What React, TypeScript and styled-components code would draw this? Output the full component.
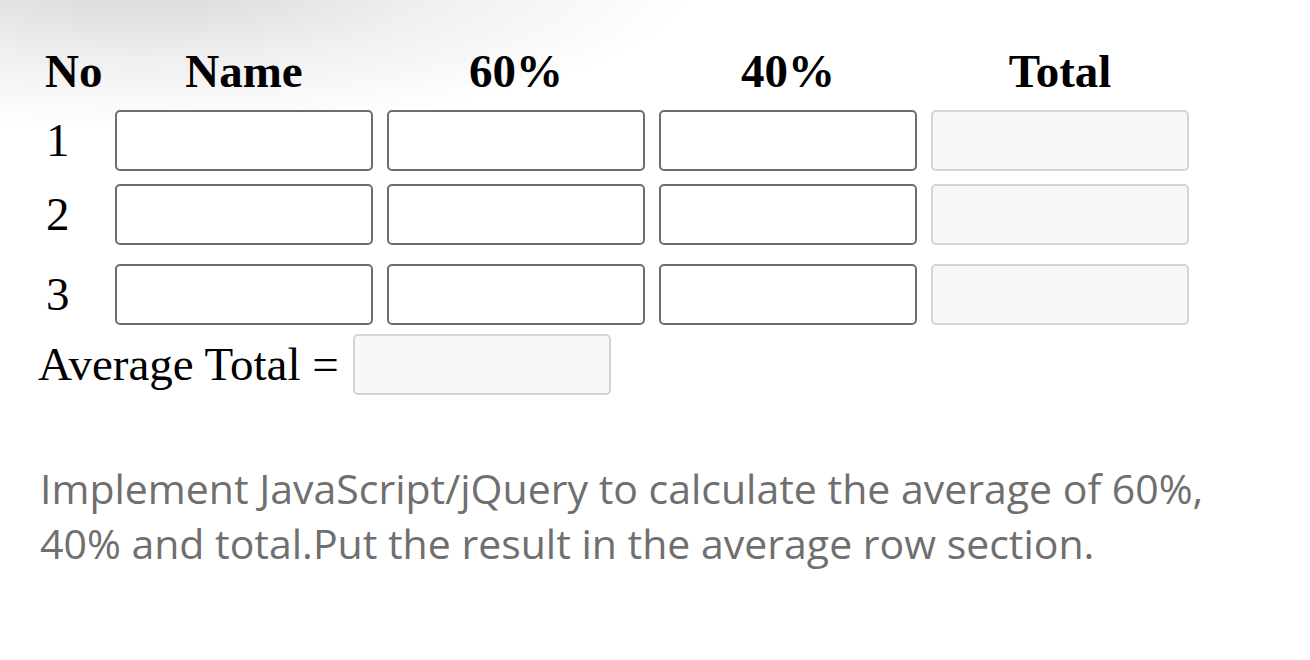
import React from "react";
import styled, { createGlobalStyle } from "styled-components";

const COLUMNS = ["60%", "40%", "Total"];
const ROWS = [
  { no: 1, top: 12 },
  { no: 2, top: 13 },
  { no: 3, top: 19 },
];

const GlobalStyle = createGlobalStyle`
  html, body {
    margin: 0;
    padding: 0;
    background: #ffffff;
  }
  body {
    width: 1310px;
    height: 660px;
    overflow: hidden;
  }
`;

const Page = styled.div`
  width: 1310px;
  height: 660px;
  box-sizing: border-box;
  padding-top: 45px;
  background: radial-gradient(
    ellipse 560px 150px at 140px -20px,
    rgba(0, 0, 0, 0.16) 0%,
    rgba(0, 0, 0, 0.06) 55%,
    rgba(0, 0, 0, 0) 100%
  );
  font-family: "Liberation Serif", "Times New Roman", serif;
  color: #000;
`;

const Table = styled.div`
  padding-left: 45px;
  display: flex;
  flex-direction: column;
`;

const Row = styled.div<{ $top?: number }>`
  display: grid;
  grid-template-columns: 56px repeat(4, 258px);
  column-gap: 14px;
  align-items: center;
  margin-top: ${(p) => p.$top ?? 0}px;
`;

const Head = styled.div<{ $align?: string }>`
  font-size: 47px;
  font-weight: bold;
  line-height: 53px;
  white-space: nowrap;
  text-align: ${(p) => p.$align ?? "center"};
`;

const Num = styled.div`
  font-size: 47px;
  line-height: 53px;
  padding-left: 1px;
`;

const Field = styled.input<{ $readOnly?: boolean }>`
  box-sizing: border-box;
  width: 258px;
  height: 61px;
  margin: 0;
  border: 2px solid ${(p) => (p.$readOnly ? "#d4d4d4" : "#6e6e6e")};
  border-radius: 5px;
  background: ${(p) => (p.$readOnly ? "#f8f8f8" : "#ffffff")};
  outline: none;
`;

const AverageRow = styled.div`
  display: flex;
  align-items: center;
  gap: 14px;
  margin-top: 9px;
  padding-left: 38px;
`;

const AverageLabel = styled.span`
  font-size: 47px;
  line-height: 53px;
  white-space: nowrap;
`;

const Note = styled.p`
  margin: 66px 0 0 40px;
  width: 1240px;
  font-family: "Open Sans", "Noto Sans", sans-serif;
  font-size: 41px;
  line-height: 55px;
  color: #6f6f6f;
`;

export default function App() {
  return (
    <Page>
      <GlobalStyle />
      <Table>
        <Row>
          <Head $align="left">No</Head>
          <Head>Name</Head>
          {COLUMNS.map((c) => (
            <Head key={c}>{c}</Head>
          ))}
        </Row>
        {ROWS.map((r) => (
          <Row key={r.no} $top={r.top}>
            <Num>{r.no}</Num>
            <Field type="text" />
            <Field type="text" />
            <Field type="text" />
            <Field type="text" $readOnly readOnly />
          </Row>
        ))}
      </Table>
      <AverageRow>
        <AverageLabel>Average Total =</AverageLabel>
        <Field type="text" $readOnly readOnly />
      </AverageRow>
      <Note>
        Implement JavaScript/jQuery to calculate the average of 60%,
        <br />
        40% and total.Put the result in the average row section.
      </Note>
    </Page>
  );
}
